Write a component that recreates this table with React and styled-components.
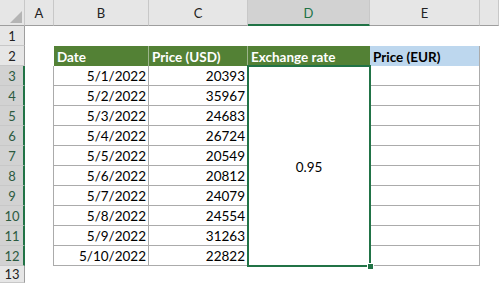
import styled, { createGlobalStyle } from "styled-components";

const GlobalStyle = createGlobalStyle`
  html, body {
    margin: 0;
    padding: 0;
    background: #fff;
  }
  * {
    box-sizing: border-box;
  }
`;

const GREEN = "#217346";
const GRID = "#ababab";
const HEAD_LINE = "#c8c8c8";
const HEAD_GREEN = "#538135";
const HEAD_SEP = "#9db58c";

const Sheet = styled.div`
  display: grid;
  grid-template-columns: 25px 29px 95px 99px 122px 110px 1fr;
  grid-template-rows: 26px repeat(12, 20px) 1fr;
  width: 499px;
  height: 283px;
  overflow: hidden;
  background: #fff;
  font-family: Lato, "Liberation Sans", sans-serif;
  font-size: 13.5px;
  color: #000;
`;

const Corner = styled.div`
  position: relative;
  background: #e6e6e6;
  border-right: 1px solid ${HEAD_LINE};
  border-bottom: 1px solid #9e9e9e;

  &::after {
    content: "";
    position: absolute;
    right: 2px;
    bottom: 2px;
    width: 0;
    height: 0;
    border-left: 12px solid transparent;
    border-bottom: 12px solid #b4b4b4;
  }
`;

const ColHeader = styled.div`
  display: flex;
  align-items: center;
  justify-content: center;
  background: ${(p) => (p.$selected ? "#d2d2d2" : "#e6e6e6")};
  border-right: 1px solid ${HEAD_LINE};
  border-bottom: ${(p) =>
    p.$selected ? `2px solid ${GREEN}` : "1px solid #9e9e9e"};
  color: ${(p) => (p.$selected ? GREEN : "#222")};
  font-size: 13px;
  padding-top: ${(p) => (p.$selected ? "1px" : "0")};
`;

const RowHeader = styled.div`
  display: flex;
  align-items: center;
  justify-content: center;
  background: ${(p) => (p.$selected ? "#d2d2d2" : "#e6e6e6")};
  border-bottom: 1px solid ${HEAD_LINE};
  border-right: ${(p) =>
    p.$selected ? `2px solid ${GREEN}` : "1px solid #9e9e9e"};
  color: ${(p) => (p.$selected ? "#2b5a40" : "#222")};
  font-size: 13px;
  padding-left: ${(p) => (p.$selected ? "1px" : "0")};
`;

const Cell = styled.div`
  grid-column: ${(p) => p.$col || "auto"};
  display: flex;
  align-items: flex-end;
  justify-content: ${(p) => (p.$align === "right" ? "flex-end" : "flex-start")};
  padding: 0 2px 1px 3px;
  white-space: nowrap;
  overflow: hidden;
  background: ${(p) => p.$bg || "transparent"};
  color: ${(p) => p.$color || "#000"};
  font-weight: ${(p) => (p.$bold ? 700 : 400)};
  border-right: ${(p) => (p.$right ? `1px solid ${p.$right}` : "none")};
  border-bottom: ${(p) => (p.$bottom ? `1px solid ${p.$bottom}` : "none")};
`;

const Merged = styled.div`
  position: relative;
  grid-column: 5;
  grid-row: 4 / span 10;
  display: flex;
  align-items: center;
  justify-content: center;
  padding-top: 1px;
  outline: 2px solid ${GREEN};
  outline-offset: -1px;
  z-index: 1;
`;

const FillHandle = styled.span`
  position: absolute;
  right: -4px;
  bottom: -4px;
  width: 7px;
  height: 7px;
  background: ${GREEN};
  border: 1px solid #fff;
`;

const columns = ["A", "B", "C", "D", "E", ""];

const rows = [
  ["5/1/2022", 20393],
  ["5/2/2022", 35967],
  ["5/3/2022", 24683],
  ["5/4/2022", 26724],
  ["5/5/2022", 20549],
  ["5/6/2022", 20812],
  ["5/7/2022", 24079],
  ["5/8/2022", 24554],
  ["5/9/2022", 31263],
  ["5/10/2022", 22822],
];

function Row({ n, date, price }) {
  return (
    <>
      <RowHeader $selected>{n}</RowHeader>
      <Cell $right={GRID} />
      <Cell $align="right" $right={GRID} $bottom={GRID}>
        {date}
      </Cell>
      <Cell $align="right" $right={GRID} $bottom={GRID}>
        {price}
      </Cell>
      {/* column D is the merged cell */}
      <Cell $col={6} $right={GRID} $bottom={GRID} />
      <Cell />
    </>
  );
}

export default function App() {
  return (
    <>
      <GlobalStyle />
      <Sheet>
        <Corner />
        {columns.map((c) => (
          <ColHeader key={c || "F"} $selected={c === "D"}>
            {c}
          </ColHeader>
        ))}

        <RowHeader>1</RowHeader>
        <Cell />
        <Cell />
        <Cell />
        <Cell />
        <Cell />
        <Cell />

        <RowHeader>2</RowHeader>
        <Cell />
        <Cell $bg={HEAD_GREEN} $color="#fff" $bold $right={HEAD_SEP}>
          Date
        </Cell>
        <Cell $bg={HEAD_GREEN} $color="#fff" $bold $right={HEAD_SEP}>
          Price (USD)
        </Cell>
        <Cell $bg={HEAD_GREEN} $color="#fff" $bold>
          Exchange rate
        </Cell>
        <Cell $bg="#bdd7ee" $bold $right={GRID}>
          Price (EUR)
        </Cell>
        <Cell />

        {rows.map(([date, price], i) => (
          <Row key={date} n={i + 3} date={date} price={price} />
        ))}

        <Merged>
          0.95
          <FillHandle />
        </Merged>

        <RowHeader>13</RowHeader>
      </Sheet>
    </>
  );
}
